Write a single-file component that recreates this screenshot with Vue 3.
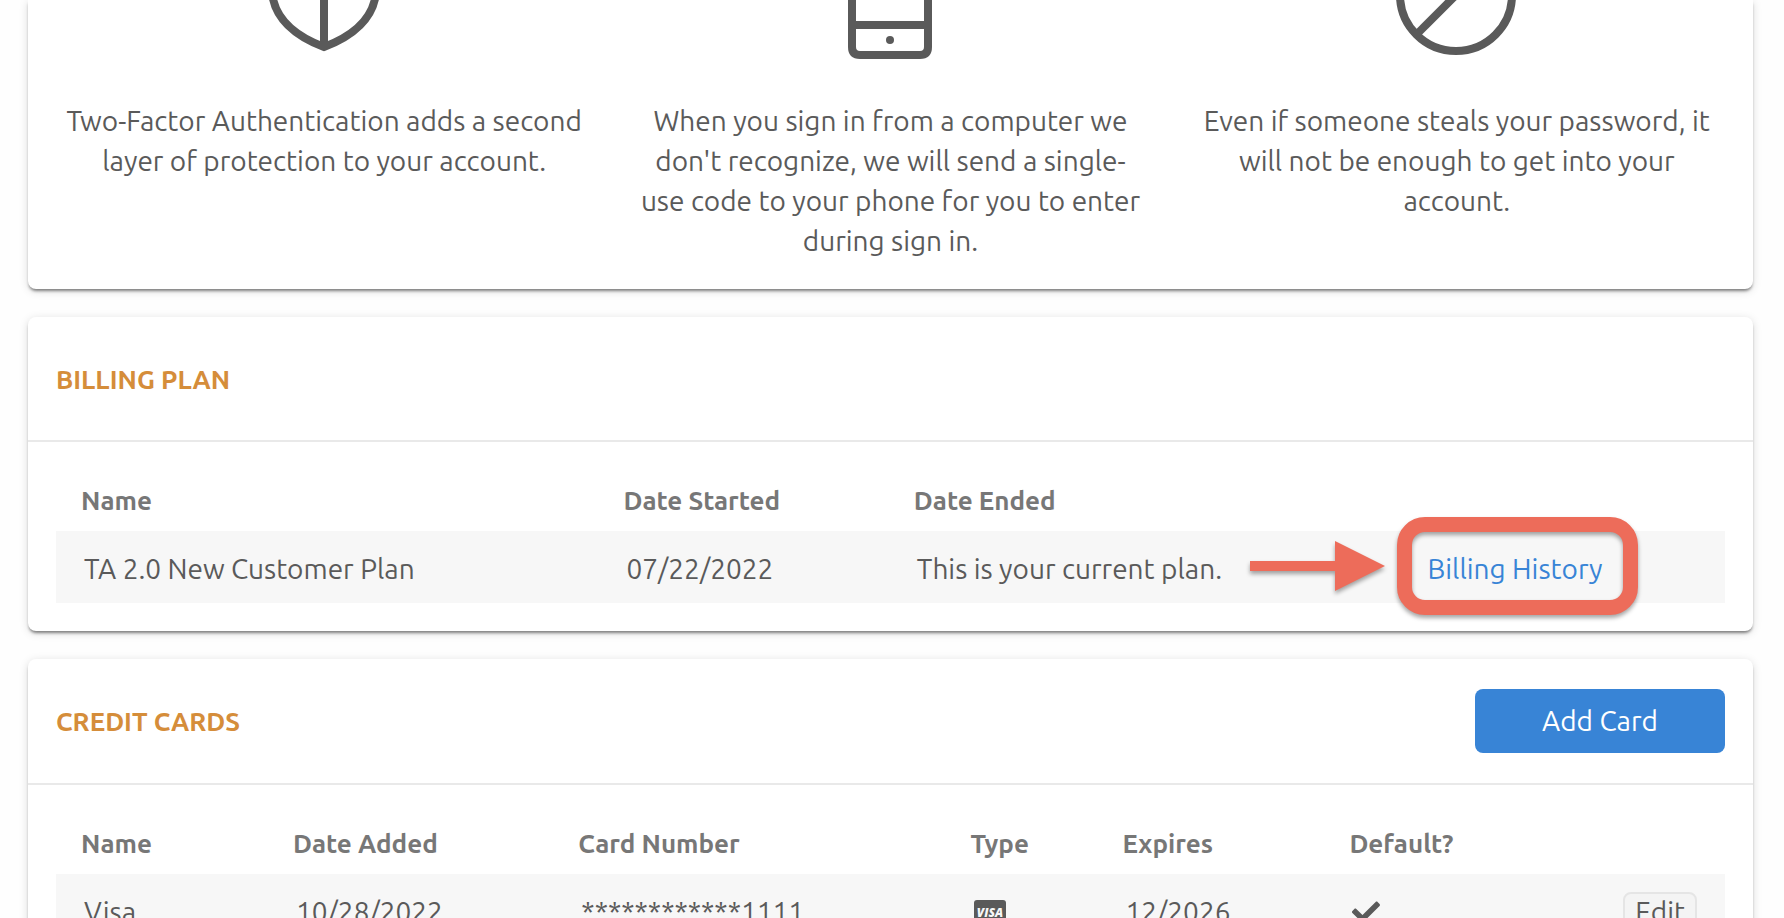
<template>
    <main class="account-page">
        <section class="card two-factor">
            <div v-for="item in features" :key="item.icon" class="feature">
                <svg v-if="item.icon === 'shield'" class="feature-icon" viewBox="0 0 128 60" aria-hidden="true">
                    <path d="M12 -8C14 18 35 36 64 47C93 36 114 18 116 -8M64 -8V47" />
                </svg>
                <svg v-else-if="item.icon === 'phone'" class="feature-icon" viewBox="0 0 128 60" aria-hidden="true">
                    <path d="M26 -8V47Q26 55 34 55H94Q102 55 102 47V-8M26 25H102" />
                    <circle class="dot" cx="64" cy="40" r="4" />
                </svg>
                <svg v-else class="feature-icon" viewBox="0 0 128 60" aria-hidden="true">
                    <circle cx="63" cy="-5" r="56" />
                    <path d="M25 33L71 -13" />
                </svg>
                <p class="feature-text">{{ item.text }}</p>
            </div>
        </section>

        <section class="card">
            <header class="card-header">
                <h2>Billing Plan</h2>
            </header>
            <div class="card-body">
                <table class="plan-table">
                    <colgroup>
                        <col class="plan-name" />
                        <col class="plan-started" />
                        <col class="plan-ended" />
                        <col />
                    </colgroup>
                    <thead>
                        <tr>
                            <th scope="col">Name</th>
                            <th scope="col">Date Started</th>
                            <th scope="col">Date Ended</th>
                            <td></td>
                        </tr>
                    </thead>
                    <tbody>
                        <tr v-for="plan in plans" :key="plan.name">
                            <td>{{ plan.name }}</td>
                            <td>{{ plan.started }}</td>
                            <td>{{ plan.ended }}</td>
                            <td>
                                <span class="callout">
                                    <a href="#billing-history">Billing History</a>
                                    <span class="callout-ring"></span>
                                    <svg class="callout-arrow" viewBox="0 0 135 50" aria-hidden="true">
                                        <path d="M0 20H85V0L135 25L85 50V30H0Z" />
                                    </svg>
                                </span>
                            </td>
                        </tr>
                    </tbody>
                </table>
            </div>
        </section>

        <section class="card">
            <header class="card-header">
                <h2>Credit Cards</h2>
                <button type="button" class="btn-primary">Add Card</button>
            </header>
            <div class="card-body">
                <table class="cards-table">
                    <colgroup>
                        <col class="card-name" />
                        <col class="card-added" />
                        <col class="card-number" />
                        <col class="card-type" />
                        <col class="card-expires" />
                        <col />
                        <col class="card-actions" />
                    </colgroup>
                    <thead>
                        <tr>
                            <th scope="col">Name</th>
                            <th scope="col">Date Added</th>
                            <th scope="col">Card Number</th>
                            <th scope="col">Type</th>
                            <th scope="col">Expires</th>
                            <th scope="col">Default?</th>
                            <td></td>
                        </tr>
                    </thead>
                    <tbody>
                        <tr v-for="card in cards" :key="card.number">
                            <td>{{ card.name }}</td>
                            <td>{{ card.added }}</td>
                            <td>{{ card.number }}</td>
                            <td>
                                <svg class="visa-icon" viewBox="0 0 32 28" role="img" aria-label="Visa">
                                    <rect x="0" y="2" width="32" height="24" rx="3" />
                                    <text x="16" y="19" text-anchor="middle">VISA</text>
                                </svg>
                            </td>
                            <td>{{ card.expires }}</td>
                            <td>
                                <svg v-if="card.isDefault" class="check-icon" viewBox="0 0 512 512" role="img" aria-label="Default card">
                                    <path d="M174 439L7 273c-10-10-10-26 0-36l36-36c10-10 26-10 36 0l113 112L432 73c10-10 26-10 36 0l36 36c10 10 10 26 0 36L210 439c-10 10-26 10-36 0z" />
                                </svg>
                            </td>
                            <td class="actions">
                                <button type="button" class="btn-edit">Edit</button>
                            </td>
                        </tr>
                    </tbody>
                </table>
            </div>
        </section>
    </main>
</template>

<script setup>
const features = [
    { icon: "shield", text: "Two-Factor Authentication adds a second\nlayer of protection to your account." },
    { icon: "phone", text: "When you sign in from a computer we\ndon't recognize, we will send a single-\nuse code to your phone for you to enter\nduring sign in." },
    { icon: "blocked", text: "Even if someone steals your password, it\nwill not be enough to get into your\naccount." },
];

const plans = [{ name: "TA 2.0 New Customer Plan", started: "07/22/2022", ended: "This is your current plan." }];

const cards = [{ name: "Visa", added: "10/28/2022", number: "************1111", expires: "12/2026", isDefault: true }];
</script>

<style>
body {
    background: #fefefe;
}
</style>

<style scoped>
.account-page {
    box-sizing: border-box;
    display: flex;
    flex-direction: column;
    gap: 28px;
    height: 100vh;
    padding: 0 31px 0 28px;
    overflow: hidden;
    font-family: Ubuntu, "Open Sans", "Noto Sans", sans-serif;
    font-size: 28px;
    line-height: 40px;
    color: #5a5a5a;
}

.card {
    flex: none;
    border-radius: 8px;
    background: #fff;
    box-shadow: 0 3px 3px -1px rgba(0, 0, 0, 0.45), 0 2px 10px rgba(0, 0, 0, 0.14);
}

.two-factor {
    display: grid;
    grid-template-columns: repeat(3, 1fr);
    padding: 0 13px 28px;
    border-radius: 0 0 8px 8px;
}

.feature {
    display: flex;
    flex-direction: column;
    align-items: center;
    gap: 41px;
    text-align: center;
}

.feature-icon {
    width: 128px;
    height: 60px;
    fill: none;
    stroke: #5a5a5a;
    stroke-width: 8;
}

.feature-icon .dot {
    fill: #5a5a5a;
    stroke: none;
}

.feature-text {
    margin: 0;
    white-space: pre;
}

.card-header {
    box-sizing: border-box;
    display: flex;
    align-items: center;
    justify-content: space-between;
    min-height: 125px;
    padding: 30px 28px;
    border-bottom: 2px solid #e9e9e9;
}

.card-header h2 {
    margin: 0;
    padding-top: 2px;
    font-size: 26px;
    font-weight: 700;
    text-transform: uppercase;
    color: #d58d3a;
}

.card-body {
    padding: 28px;
}

table {
    width: 100%;
    table-layout: fixed;
    border-collapse: collapse;
}

th {
    padding: 11px 0 10px 25px;
    font-size: 26px;
    font-weight: 700;
    text-align: left;
    color: #777;
}

td {
    padding: 0 0 0 28px;
    white-space: nowrap;
}

tbody tr {
    height: 72px;
    background: #f7f7f7;
}

.plan-table tbody td {
    padding-top: 4px;
}

.cards-table tbody tr {
    height: 76px;
}

.plan-name {
    width: 32.5%;
}

.plan-started {
    width: 17.4%;
}

.plan-ended {
    width: 30.6%;
}

.card-name {
    width: 12.7%;
}

.card-added {
    width: 17.1%;
}

.card-number {
    width: 23.5%;
}

.card-type {
    width: 9.1%;
}

.card-expires {
    width: 13.6%;
}

.card-actions {
    width: 10%;
}

.actions {
    padding: 0 28px 0 0;
    text-align: right;
}

a {
    color: #3884d6;
    text-decoration: none;
}

.callout {
    position: relative;
    display: inline-block;
}

.callout-ring {
    position: absolute;
    inset: -32px -35px -26px -31px;
    border: 15px solid #ed6c5a;
    border-radius: 28px;
    filter: drop-shadow(0 3px 2px rgba(0, 0, 0, 0.35));
    pointer-events: none;
}

.callout-arrow {
    position: absolute;
    top: -8px;
    left: -178px;
    width: 135px;
    height: 50px;
    overflow: visible;
    fill: #ed6c5a;
    filter: drop-shadow(0 3px 2px rgba(0, 0, 0, 0.35));
}

button {
    font: inherit;
    cursor: pointer;
}

.btn-primary {
    width: 250px;
    height: 64px;
    padding: 0;
    border: 0;
    border-radius: 8px;
    background: #3884d6;
    color: #fff;
}

.btn-edit {
    height: 40px;
    padding: 0 10px;
    border: 2px solid #e5e5e5;
    border-radius: 8px;
    background: #f4f4f4;
    color: #5a5a5a;
    line-height: 36px;
}

.visa-icon,
.check-icon {
    display: block;
    height: 28px;
    fill: #5a5a5a;
}

.visa-icon {
    width: 32px;
}

.visa-icon text {
    font-family: "Open Sans", "Noto Sans", sans-serif;
    font-size: 12px;
    font-style: italic;
    font-weight: 800;
    fill: #f7f7f7;
}

.check-icon {
    width: 28px;
}
</style>
